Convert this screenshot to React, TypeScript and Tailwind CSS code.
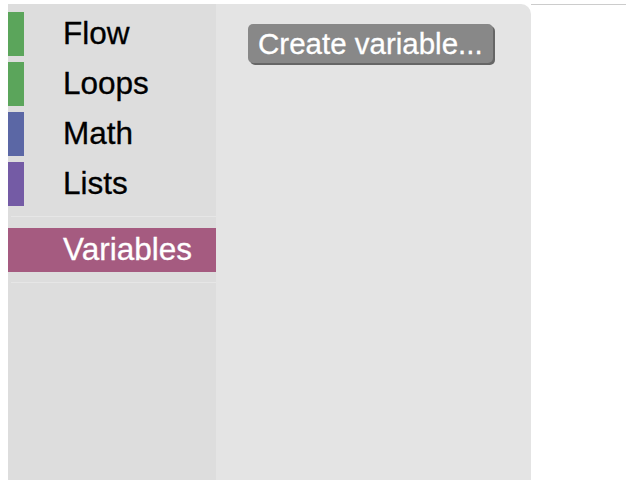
const CATEGORIES = [
  { name: "Flow", color: "bg-[#5ba55b]" },
  { name: "Loops", color: "bg-[#5ba55b]" },
  { name: "Math", color: "bg-[#5b67a5]" },
  { name: "Lists", color: "bg-[#745ba5]" },
];

function Separator() {
  return <div className="ml-[3px] h-px bg-[#e6e6e6]" />;
}

export default function App() {
  return (
    <div className="h-[480px] w-[626px] overflow-hidden bg-white pl-2 pt-1 font-['Liberation_Sans',Arial,sans-serif]">
      <div className="flex h-full">
        {/* toolbox */}
        <div className="flex w-[208px] shrink-0 flex-col bg-[#dddddd] pt-2">
          <div className="flex flex-col gap-[6px]">
            {CATEGORIES.map((c) => (
              <div key={c.name} className="flex h-[44px] items-center">
                <div className={`h-full w-4 ${c.color}`} />
                <span className="pl-[39px] text-[31.5px] leading-none text-black [-webkit-text-stroke:0.3px_black]">
                  {c.name}
                </span>
              </div>
            ))}
          </div>
          <div className="mb-[11px] mt-[10px]">
            <Separator />
          </div>
          <div className="flex h-[44px] items-center bg-[#a55b80]">
            <span className="pl-[55px] text-[31.5px] leading-none text-white [-webkit-text-stroke:0.3px_white]">
              Variables
            </span>
          </div>
          <div className="mt-[10px]">
            <Separator />
          </div>
        </div>

        {/* flyout */}
        <div className="w-[315px] shrink-0 rounded-tr-[10px] bg-[#e4e4e4] pl-8 pt-5">
          <button className="flex h-[39px] items-center rounded-[5px] bg-[#888888] pl-[10px] pr-[10px] text-[29.5px] leading-none text-white shadow-[2px_2px_0_#666666] [-webkit-text-stroke:0.3px_white]">
            Create variable...
          </button>
        </div>

        {/* workspace */}
        <div className="flex-1 border-t border-[#cccccc]" />
      </div>
    </div>
  );
}
